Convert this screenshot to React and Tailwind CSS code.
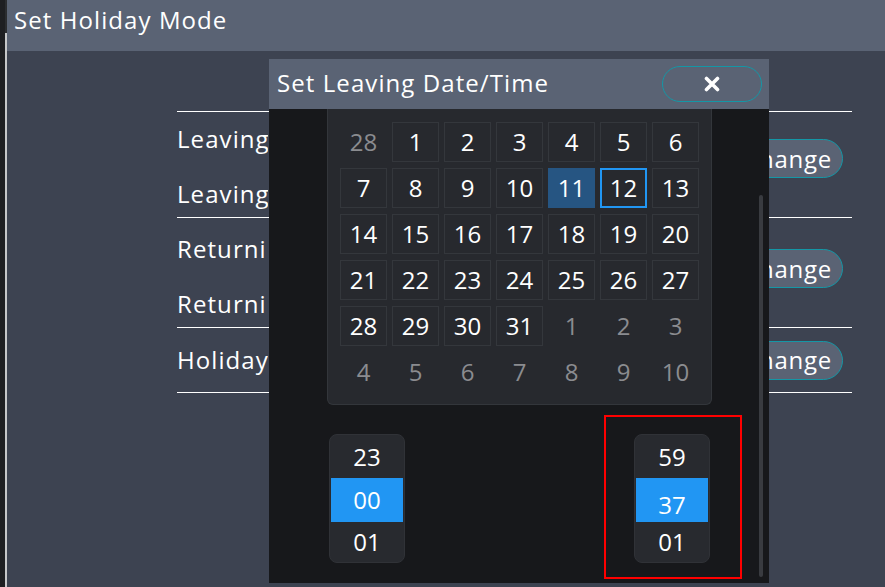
// App.jsx — Holiday mode settings with the leaving date/time picker open
const WEEKS = [
  [[28, 'o'], [1], [2], [3], [4], [5], [6]],
  [[7], [8], [9], [10], [11, 'sel'], [12, 'today'], [13]],
  [[14], [15], [16], [17], [18], [19], [20]],
  [[21], [22], [23], [24], [25], [26], [27]],
  [[28], [29], [30], [31], [1, 'o'], [2, 'o'], [3, 'o']],
  [[4, 'o'], [5, 'o'], [6, 'o'], [7, 'o'], [8, 'o'], [9, 'o'], [10, 'o']],
];

function DayCell({ day, kind }) {
  const base = 'w-[47px] h-[40px] flex items-center justify-center text-[24px] leading-none';
  if (kind === 'o') return <div className={`${base} text-[#8b8c90]`}>{day}</div>;
  if (kind === 'sel') return <div className={`${base} bg-[#265582] text-white`}>{day}</div>;
  if (kind === 'today')
    return <div className={`${base} border-2 border-[#2196f3] text-white`}>{day}</div>;
  return <div className={`${base} border border-[#34373c] text-white`}>{day}</div>;
}

function ChangeButton() {
  return (
    <button className="block h-[39px] px-[10px] rounded-full border border-[#1497a6] bg-[#5a6374] text-[24px] leading-none tracking-[0.03em] text-white">
      Change
    </button>
  );
}

// label column stops where the dialog's left edge sits
function Label({ children }) {
  return <span className="block w-[91px] overflow-hidden whitespace-nowrap">{children}</span>;
}

function Wheel({ top, mid, bottom, midClass = '' }) {
  return (
    <div className="w-[76px] h-[129px] flex flex-col rounded-[8px] border border-[#303237] bg-[#282a2f] px-[1px] text-[24px] leading-none text-white">
      <div className="h-[43px] flex items-center justify-center">{top}</div>
      <div className={`h-[44px] flex items-center justify-center bg-[#2196f3] ${midClass}`}>{mid}</div>
      <div className="flex-1 flex items-center justify-center">{bottom}</div>
    </div>
  );
}

export default function App() {
  return (
    <div className="relative w-[885px] h-[587px] flex overflow-hidden font-['Open_Sans',sans-serif] text-white">
      {/* window edge */}
      <div className="w-[5px] bg-[#1e1f22]" />
      <div className="w-[2px] flex flex-col">
        <div className="h-[33px] bg-[#2b2d30]" />
        <div className="flex-1 bg-[#c6c7c9]" />
      </div>

      {/* settings page */}
      <div className="flex-1 flex flex-col bg-[#3d4351]">
        <div className="h-[51px] bg-[#5a6374] pl-[7px] pt-[4px]">
          <h1 className="text-[24px] leading-[32px] tracking-[0.045em]">Set Holiday Mode</h1>
        </div>

        <div className="ml-[170px] mt-[60px] w-[675px] text-[24px] leading-[32px] tracking-[0.045em]">
          <div className="flex justify-between items-start border-t border-white pt-[11px] pb-[7px]">
            <div className="flex flex-col gap-[23px]">
              <Label>Leaving Date</Label>
              <Label>Leaving Time</Label>
            </div>
            <div className="mt-[16px] mr-[9px]"><ChangeButton /></div>
          </div>
          <div className="flex justify-between items-start border-t border-white pt-[15px] pb-[7px]">
            <div className="flex flex-col gap-[23px]">
              <Label>Returning Date</Label>
              <Label>Returning Time</Label>
            </div>
            <div className="mt-[16px] mr-[9px]"><ChangeButton /></div>
          </div>
          <div className="h-[66px] flex justify-between items-center border-y border-white">
            <Label>Holiday Mode</Label>
            <div className="mr-[9px]"><ChangeButton /></div>
          </div>
        </div>
      </div>

      {/* date/time dialog */}
      <div className="absolute left-[269px] top-[59px] w-[500px] h-[524px] flex flex-col">
        <div className="h-[50px] flex justify-between items-start bg-[#5a6374] pl-[8px] pr-[7px] pt-[7px]">
          <h2 className="mt-[1px] text-[24px] leading-[32px] tracking-[0.045em]">Set Leaving Date/Time</h2>
          <button className="w-[100px] h-[36px] flex items-center justify-center rounded-full border border-[#1497a6] bg-[#5a6374]">
            <svg width="18" height="16" viewBox="0 0 18 16">
              <path d="M3.5 2.5 14.5 13.5M14.5 2.5 3.5 13.5" stroke="#fff" strokeWidth="3.6" strokeLinecap="round" />
            </svg>
          </button>
        </div>

        <div className="flex-1 flex bg-[#17181b]">
          <div className="flex-1 overflow-hidden">
            <div className="ml-[58px] w-[385px] rounded-b-[6px] border-x border-b border-[#33363b] bg-[#27292e] px-[12px] pt-[13px] pb-[12px]">
              <div className="grid grid-cols-7 gap-x-[5px] gap-y-[6px]">
                {WEEKS.flat().map(([day, kind], i) => (
                  <DayCell key={i} day={day} kind={kind} />
                ))}
              </div>
            </div>

            <div className="flex items-start mt-[10px]">
              <div className="ml-[60px] mt-[19px]">
                <Wheel top="23" mid="00" bottom="01" />
              </div>
              <div className="ml-[199px] w-[138px] h-[164px] border-2 border-[#ff0000] pl-[28px] pt-[17px]">
                <Wheel top="59" mid="37" bottom="01" midClass="pt-[10px]" />
              </div>
            </div>
          </div>

          {/* scrollbar */}
          <div className="w-[4px] mr-[6px] pt-[86px] pb-[6px] flex flex-col">
            <div className="flex-1 rounded-full bg-[#393b40]" />
          </div>
        </div>
      </div>
    </div>
  );
}
